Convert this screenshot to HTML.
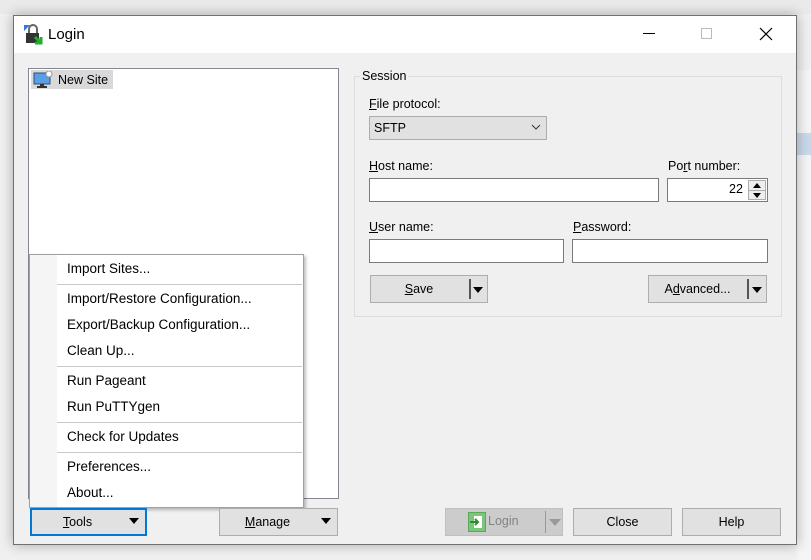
<!DOCTYPE html>
<html><head><meta charset="utf-8"><style>
*{box-sizing:border-box;margin:0;padding:0}
body{width:811px;height:559px;overflow:hidden;background:#f0f0f0;font-family:"Liberation Sans",sans-serif;font-size:12.5px;color:#000;position:relative}
.a{position:absolute}
.win{left:13px;top:15px;width:784px;height:530px;border:1px solid #707070;background:#f0f0f0;box-shadow:0 0 12px rgba(0,0,0,.3)}
.inp{background:#fff;border:1px solid #7a7a7a}
.btn{background:#e1e1e1;border:1px solid #adadad;text-align:center;line-height:26px}
.mi{left:67px;font-size:13.5px}
.sep{left:57px;width:245px;height:1px;background:#c8c8c8}
.tri{width:0;height:0;border-left:5px solid transparent;border-right:5px solid transparent;border-top:6px solid #000}
u{text-decoration:underline}
</style></head><body>
<div class="a" style="left:0;top:0;width:811px;height:14px;background:#eaeaea"></div>
<div class="a" style="left:797px;top:70px;width:14px;height:490px;background:#f5f5f5"></div>
<div class="a" style="left:797px;top:133px;width:14px;height:22px;background:#c9d9ea"></div>
<div class="a win">
 <div class="a" style="left:0;top:0;width:782px;height:37px;background:#fff"></div>
</div>
<!-- title icon -->
<svg class="a" style="left:23px;top:24px" width="22" height="22" viewBox="0 0 22 22"><path d="M1 1h6l-6 6z" fill="#2a7be4"/><rect x="3" y="9" width="13" height="10" fill="#333"/><path d="M6 9V5a4 4 0 0 1 8 0v4" stroke="#666" stroke-width="2" fill="none"/><path d="M12 13l6 6M18 13v6h-6" stroke="#1fae2d" stroke-width="3" fill="none"/></svg>
<div class="a" style="left:48px;top:26px;font-size:15px">Login</div>
<div class="a" style="left:643px;top:33px;width:12px;height:1px;background:#000"></div>
<div class="a" style="left:701px;top:28px;width:11px;height:11px;border:1px solid #bbb"></div>
<svg class="a" style="left:759px;top:27px" width="14" height="14"><path d="M1 1L13 13M13 1L1 13" stroke="#000" stroke-width="1.2"/></svg>
<!-- tree -->
<div class="a inp" style="left:28px;top:68px;width:311px;height:431px;border-color:#828790"></div>
<div class="a" style="left:31px;top:70px;width:82px;height:19px;background:#d9d9d9"></div>
<svg class="a" style="left:33px;top:71px" width="20" height="18"><rect x="1" y="2" width="16" height="11" fill="#5b9ee8" stroke="#2a4f7c"/><rect x="7" y="13" width="4" height="2" fill="#333"/><rect x="4" y="15" width="10" height="2" fill="#333"/><circle cx="16" cy="3" r="3" fill="#fff" stroke="#999"/></svg>
<div class="a" style="left:58px;top:73px">New Site</div>
<!-- session -->
<div class="a" style="left:354px;top:76px;width:428px;height:241px;border:1px solid #dcdcdc"></div>
<div class="a" style="left:360px;top:69px;background:#f0f0f0;padding:0 2px">Session</div>
<div class="a" style="left:369px;top:97px"><u>F</u>ile protocol:</div>
<div class="a" style="left:369px;top:116px;width:178px;height:24px;background:#e1e1e1;border:1px solid #adadad;padding:4px 4px">SFTP</div>
<svg class="a" style="left:531px;top:124px" width="10" height="7"><path d="M1 1l4 4 4-4" stroke="#333" fill="none"/></svg>
<div class="a" style="left:369px;top:159px"><u>H</u>ost name:</div>
<div class="a inp" style="left:369px;top:178px;width:290px;height:24px"></div>
<div class="a" style="left:668px;top:159px">Po<u>r</u>t number:</div>
<div class="a inp" style="left:667px;top:178px;width:101px;height:24px"></div>
<div class="a" style="left:729px;top:182px">22</div>
<div class="a" style="left:748px;top:180px;width:18px;height:20px;border:1px solid #adadad;background:#eee"></div>
<div class="a" style="left:749px;top:190px;width:16px;height:1px;background:#adadad"></div>
<div class="a" style="left:753px;top:183px;border-left:4px solid transparent;border-right:4px solid transparent;border-bottom:5px solid #000"></div>
<div class="a" style="left:753px;top:193px;border-left:4px solid transparent;border-right:4px solid transparent;border-top:5px solid #000"></div>
<div class="a" style="left:369px;top:220px"><u>U</u>ser name:</div>
<div class="a inp" style="left:369px;top:239px;width:195px;height:24px"></div>
<div class="a" style="left:573px;top:220px"><u>P</u>assword:</div>
<div class="a inp" style="left:572px;top:239px;width:196px;height:24px"></div>
<div class="a btn" style="left:370px;top:275px;width:118px;height:28px"><span style="margin-right:20px"><u>S</u>ave</span></div>
<div class="a" style="left:469px;top:279px;width:2px;height:20px;background:#555"></div>
<div class="a tri" style="left:473px;top:287px"></div>
<div class="a btn" style="left:648px;top:275px;width:119px;height:28px"><span style="margin-right:20px">A<u>d</u>vanced...</span></div>
<div class="a" style="left:747px;top:279px;width:2px;height:20px;background:#555"></div>
<div class="a tri" style="left:752px;top:287px"></div>
<!-- menu -->
<div class="a" style="left:29px;top:254px;width:275px;height:254px;background:#fff;border:1px solid #a0a0a0;box-shadow:2px 2px 3px rgba(0,0,0,.25)"></div>
<div class="a" style="left:30px;top:255px;width:27px;height:252px;background:#f5f5f5"></div>
<div class="a mi" style="top:261px">Import Sites...</div>
<div class="a sep" style="top:284px"></div>
<div class="a mi" style="top:291px">Import/Restore Configuration...</div>
<div class="a mi" style="top:317px">Export/Backup Configuration...</div>
<div class="a mi" style="top:343px">Clean Up...</div>
<div class="a sep" style="top:366px"></div>
<div class="a mi" style="top:373px">Run Pageant</div>
<div class="a mi" style="top:399px">Run PuTTYgen</div>
<div class="a sep" style="top:422px"></div>
<div class="a mi" style="top:429px">Check for Updates</div>
<div class="a sep" style="top:452px"></div>
<div class="a mi" style="top:459px">Preferences...</div>
<div class="a mi" style="top:485px">About...</div>
<!-- bottom buttons -->
<div class="a btn" style="left:30px;top:508px;width:117px;height:28px;border:2px solid #0078d7;line-height:24px"><span style="margin-right:22px"><u>T</u>ools</span></div>
<div class="a tri" style="left:129px;top:518px"></div>
<div class="a btn" style="left:219px;top:508px;width:119px;height:28px"><span style="margin-right:22px"><u>M</u>anage</span></div>
<div class="a tri" style="left:321px;top:518px"></div>
<div class="a btn" style="left:445px;top:508px;width:118px;height:28px;background:#ccc;border-color:#bfbfbf;color:#838383"></div>
<svg class="a" style="left:468px;top:512px" width="18" height="20"><rect x="0.5" y="0.5" width="17" height="19" fill="#7bc67b" stroke="#5aa85a"/><rect x="6" y="4" width="8" height="12" fill="#fff"/><path d="M2 10h8M7 7l3 3-3 3" stroke="#2e8b2e" stroke-width="2" fill="none"/></svg>
<div class="a" style="left:488px;top:514px;color:#838383">Login</div>
<div class="a" style="left:545px;top:511px;width:1px;height:22px;background:#999"></div>
<div class="a" style="left:549px;top:519px;border-left:6px solid transparent;border-right:6px solid transparent;border-top:7px solid #999"></div>
<div class="a btn" style="left:573px;top:508px;width:99px;height:28px">Close</div>
<div class="a btn" style="left:682px;top:508px;width:99px;height:28px">Help</div>
</body></html>
